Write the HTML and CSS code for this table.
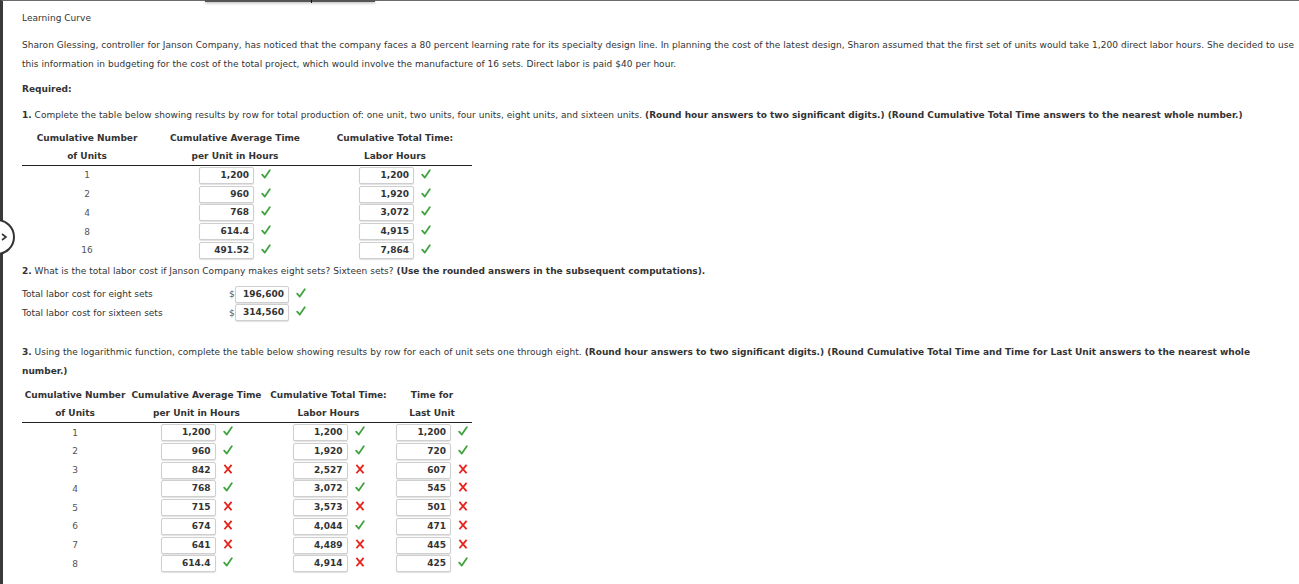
FILE: index.html
```html
<!DOCTYPE html>
<html lang="en">
<head>
<meta charset="utf-8">
<title>Learning Curve</title>
<link rel="stylesheet" href="styles.css">
</head>
<body>
<svg class="defs" width="0" height="0" aria-hidden="true">
  <symbol id="ok" viewBox="0 0 10 10"><path d="M1.2 5.6 L3.8 8.6 L8.8 1.2" fill="none" stroke="#3fa33f" stroke-width="1.8" stroke-linecap="round" stroke-linejoin="round"/></symbol>
  <symbol id="bad" viewBox="0 0 10 10"><path d="M2 1.6 L8 8.6 M8 1.6 L2 8.6" fill="none" stroke="#e8231c" stroke-width="1.8" stroke-linecap="square"/></symbol>
</svg>
<div class="screen">
<div class="tab"><span class="tick"></span></div>
<div class="nav-circle"><svg viewBox="0 0 10 10" width="10" height="10"><path d="M3 2 L7 5 L3 8" fill="none" stroke="#333" stroke-width="1.6"/></svg></div>
<main class="page">
  <p class="title">Learning Curve</p>
  <p class="intro">Sharon Glessing, controller for Janson Company, has noticed that the company faces a 80 percent learning rate for its specialty design line. In planning the cost of the latest design, Sharon assumed that the first set of units would take 1,200 direct labor hours. She decided to use this information in budgeting for the cost of the total project, which would involve the manufacture of 16 sets. Direct labor is paid $40 per hour.</p>
  <p class="req"><b>Required:</b></p>
  <p class="q q1"><b>1.</b> Complete the table below showing results by row for total production of: one unit, two units, four units, eight units, and sixteen units. <b>(Round hour answers to two significant digits.) (Round Cumulative Total Time answers to the nearest whole number.)</b></p>

  <table class="grid t1">
    <colgroup><col class="c1"><col class="c2"><col class="c3"></colgroup>
    <thead>
      <tr><th>Cumulative Number<br>of Units</th><th>Cumulative Average Time<br>per Unit in Hours</th><th>Cumulative Total Time:<br>Labor Hours</th></tr>
    </thead>
    <tbody>
      <tr><td class="n">1</td><td><span class="cell"><span class="box">1,200</span><svg class="mk"><use href="#ok"/></svg></span></td><td><span class="cell"><span class="box">1,200</span><svg class="mk"><use href="#ok"/></svg></span></td></tr>
      <tr><td class="n">2</td><td><span class="cell"><span class="box">960</span><svg class="mk"><use href="#ok"/></svg></span></td><td><span class="cell"><span class="box">1,920</span><svg class="mk"><use href="#ok"/></svg></span></td></tr>
      <tr><td class="n">4</td><td><span class="cell"><span class="box">768</span><svg class="mk"><use href="#ok"/></svg></span></td><td><span class="cell"><span class="box">3,072</span><svg class="mk"><use href="#ok"/></svg></span></td></tr>
      <tr><td class="n">8</td><td><span class="cell"><span class="box">614.4</span><svg class="mk"><use href="#ok"/></svg></span></td><td><span class="cell"><span class="box">4,915</span><svg class="mk"><use href="#ok"/></svg></span></td></tr>
      <tr><td class="n">16</td><td><span class="cell"><span class="box">491.52</span><svg class="mk"><use href="#ok"/></svg></span></td><td><span class="cell"><span class="box">7,864</span><svg class="mk"><use href="#ok"/></svg></span></td></tr>
    </tbody>
  </table>

  <p class="q q2"><b>2.</b> What is the total labor cost if Janson Company makes eight sets? Sixteen sets? <b>(Use the rounded answers in the subsequent computations).</b></p>
  <div class="costs">
    <div class="cost-row"><span class="lbl">Total labor cost for eight sets</span><span class="cur">$</span><span class="box wide">196,600</span><svg class="mk"><use href="#ok"/></svg></div>
    <div class="cost-row"><span class="lbl">Total labor cost for sixteen sets</span><span class="cur">$</span><span class="box wide">314,560</span><svg class="mk"><use href="#ok"/></svg></div>
  </div>

  <p class="q q3"><b>3.</b> Using the logarithmic function, complete the table below showing results by row for each of unit sets one through eight. <b>(Round hour answers to two significant digits.) (Round Cumulative Total Time and Time for Last Unit answers to the nearest whole number.)</b></p>

  <table class="grid t3">
    <colgroup><col class="d1"><col class="d2"><col class="d3"><col class="d4"></colgroup>
    <thead>
      <tr><th>Cumulative Number<br>of Units</th><th>Cumulative Average Time<br>per Unit in Hours</th><th>Cumulative Total Time:<br>Labor Hours</th><th>Time for<br>Last Unit</th></tr>
    </thead>
    <tbody>
      <tr><td class="n">1</td><td><span class="cell"><span class="box">1,200</span><svg class="mk"><use href="#ok"/></svg></span></td><td><span class="cell"><span class="box">1,200</span><svg class="mk"><use href="#ok"/></svg></span></td><td><span class="cell"><span class="box">1,200</span><svg class="mk"><use href="#ok"/></svg></span></td></tr>
      <tr><td class="n">2</td><td><span class="cell"><span class="box">960</span><svg class="mk"><use href="#ok"/></svg></span></td><td><span class="cell"><span class="box">1,920</span><svg class="mk"><use href="#ok"/></svg></span></td><td><span class="cell"><span class="box">720</span><svg class="mk"><use href="#ok"/></svg></span></td></tr>
      <tr><td class="n">3</td><td><span class="cell"><span class="box">842</span><svg class="mk"><use href="#bad"/></svg></span></td><td><span class="cell"><span class="box">2,527</span><svg class="mk"><use href="#bad"/></svg></span></td><td><span class="cell"><span class="box">607</span><svg class="mk"><use href="#bad"/></svg></span></td></tr>
      <tr><td class="n">4</td><td><span class="cell"><span class="box">768</span><svg class="mk"><use href="#ok"/></svg></span></td><td><span class="cell"><span class="box">3,072</span><svg class="mk"><use href="#ok"/></svg></span></td><td><span class="cell"><span class="box">545</span><svg class="mk"><use href="#bad"/></svg></span></td></tr>
      <tr><td class="n">5</td><td><span class="cell"><span class="box">715</span><svg class="mk"><use href="#bad"/></svg></span></td><td><span class="cell"><span class="box">3,573</span><svg class="mk"><use href="#bad"/></svg></span></td><td><span class="cell"><span class="box">501</span><svg class="mk"><use href="#bad"/></svg></span></td></tr>
      <tr><td class="n">6</td><td><span class="cell"><span class="box">674</span><svg class="mk"><use href="#bad"/></svg></span></td><td><span class="cell"><span class="box">4,044</span><svg class="mk"><use href="#ok"/></svg></span></td><td><span class="cell"><span class="box">471</span><svg class="mk"><use href="#bad"/></svg></span></td></tr>
      <tr><td class="n">7</td><td><span class="cell"><span class="box">641</span><svg class="mk"><use href="#bad"/></svg></span></td><td><span class="cell"><span class="box">4,489</span><svg class="mk"><use href="#bad"/></svg></span></td><td><span class="cell"><span class="box">445</span><svg class="mk"><use href="#bad"/></svg></span></td></tr>
      <tr><td class="n">8</td><td><span class="cell"><span class="box">614.4</span><svg class="mk"><use href="#ok"/></svg></span></td><td><span class="cell"><span class="box">4,914</span><svg class="mk"><use href="#bad"/></svg></span></td><td><span class="cell"><span class="box">425</span><svg class="mk"><use href="#ok"/></svg></span></td></tr>
    </tbody>
  </table>
</main>
</div>
</body>
</html>
```

FILE: styles.css
```css
html, body {
  margin: 0;
  padding: 0;
  background: #fff;
  overflow: hidden;
}
body {
  font-family: "DejaVu Sans", Verdana, sans-serif;
  font-size: 9px;
  color: #333;
}
.defs {
  position: absolute;
  width: 0;
  height: 0;
}
.screen {
  position: relative;
  border-left: 3px solid #3a3a3a;
  border-top: 1px solid #6a6a6a;
  height: 584px;
  box-sizing: border-box;
}
.tab {
  position: absolute;
  left: 202px;
  top: -1px;
  width: 170px;
  height: 2px;
  background: #555;
  box-shadow: 0 1px 3px rgba(0, 0, 0, 0.35);
}
.tick {
  position: absolute;
  left: 106px;
  top: 0;
  width: 1px;
  height: 3px;
  background: #111;
}
.nav-circle {
  position: absolute;
  left: -24px;
  top: 218px;
  width: 32px;
  height: 32px;
  border: 2px solid #333;
  border-radius: 50%;
  background: #fff;
}
.nav-circle svg {
  position: absolute;
  left: 18px;
  top: 11px;
}
.page {
  padding: 8px 2px 0 19px;
}
p {
  margin: 0;
  line-height: 19px;
  letter-spacing: 0.04px;
}
b {
  color: #333;
  letter-spacing: 0;
}
.title { margin-bottom: 8px; }
.intro { margin-bottom: 6px; }
.req { margin-bottom: 7px; }
.q1 { margin-bottom: 4px; }
.q2 { margin-top: 2px; margin-bottom: 4px; }
.q3 { margin-top: 21px; margin-bottom: 5px; }

.grid {
  border-collapse: collapse;
  table-layout: fixed;
  width: 450px;
}
.grid th {
  font-weight: bold;
  color: #333;
  line-height: 18px;
  padding: 0;
  text-align: center;
  white-space: nowrap;
  border-bottom: 1px solid #222;
}
.grid td {
  padding: 0;
  height: 18.75px;
  text-align: center;
  vertical-align: middle;
}
.grid td.n {
  color: #555;
}
.c1 { width: 130px; }
.c2 { width: 166px; }
.c3 { width: 154px; }
.d1 { width: 106px; }
.d2 { width: 137px; }
.d3 { width: 127px; }
.d4 { width: 80px; }

.cell {
  display: inline-flex;
  align-items: center;
  gap: 7px;
  vertical-align: middle;
}
.box {
  display: inline-block;
  box-sizing: border-box;
  width: 55px;
  height: 17px;
  line-height: 15px;
  border: 1px solid #cfcfcf;
  border-radius: 2px;
  box-shadow: 0 1px 1px rgba(0, 0, 0, 0.12);
  background: #fff;
  text-align: right;
  padding-right: 4px;
  font-weight: bold;
  color: #333;
}
.mk {
  width: 10px;
  height: 10px;
  flex: none;
  margin-top: -3px;
}
.costs {
  display: flex;
  flex-direction: column;
}
.cost-row {
  display: flex;
  align-items: center;
  height: 18.75px;
}
.lbl {
  width: 207px;
}
.cur {
  width: 6px;
  color: #555;
}
.box.wide {
  width: 54px;
}
.cost-row .mk {
  margin-left: 7px;
}
```
